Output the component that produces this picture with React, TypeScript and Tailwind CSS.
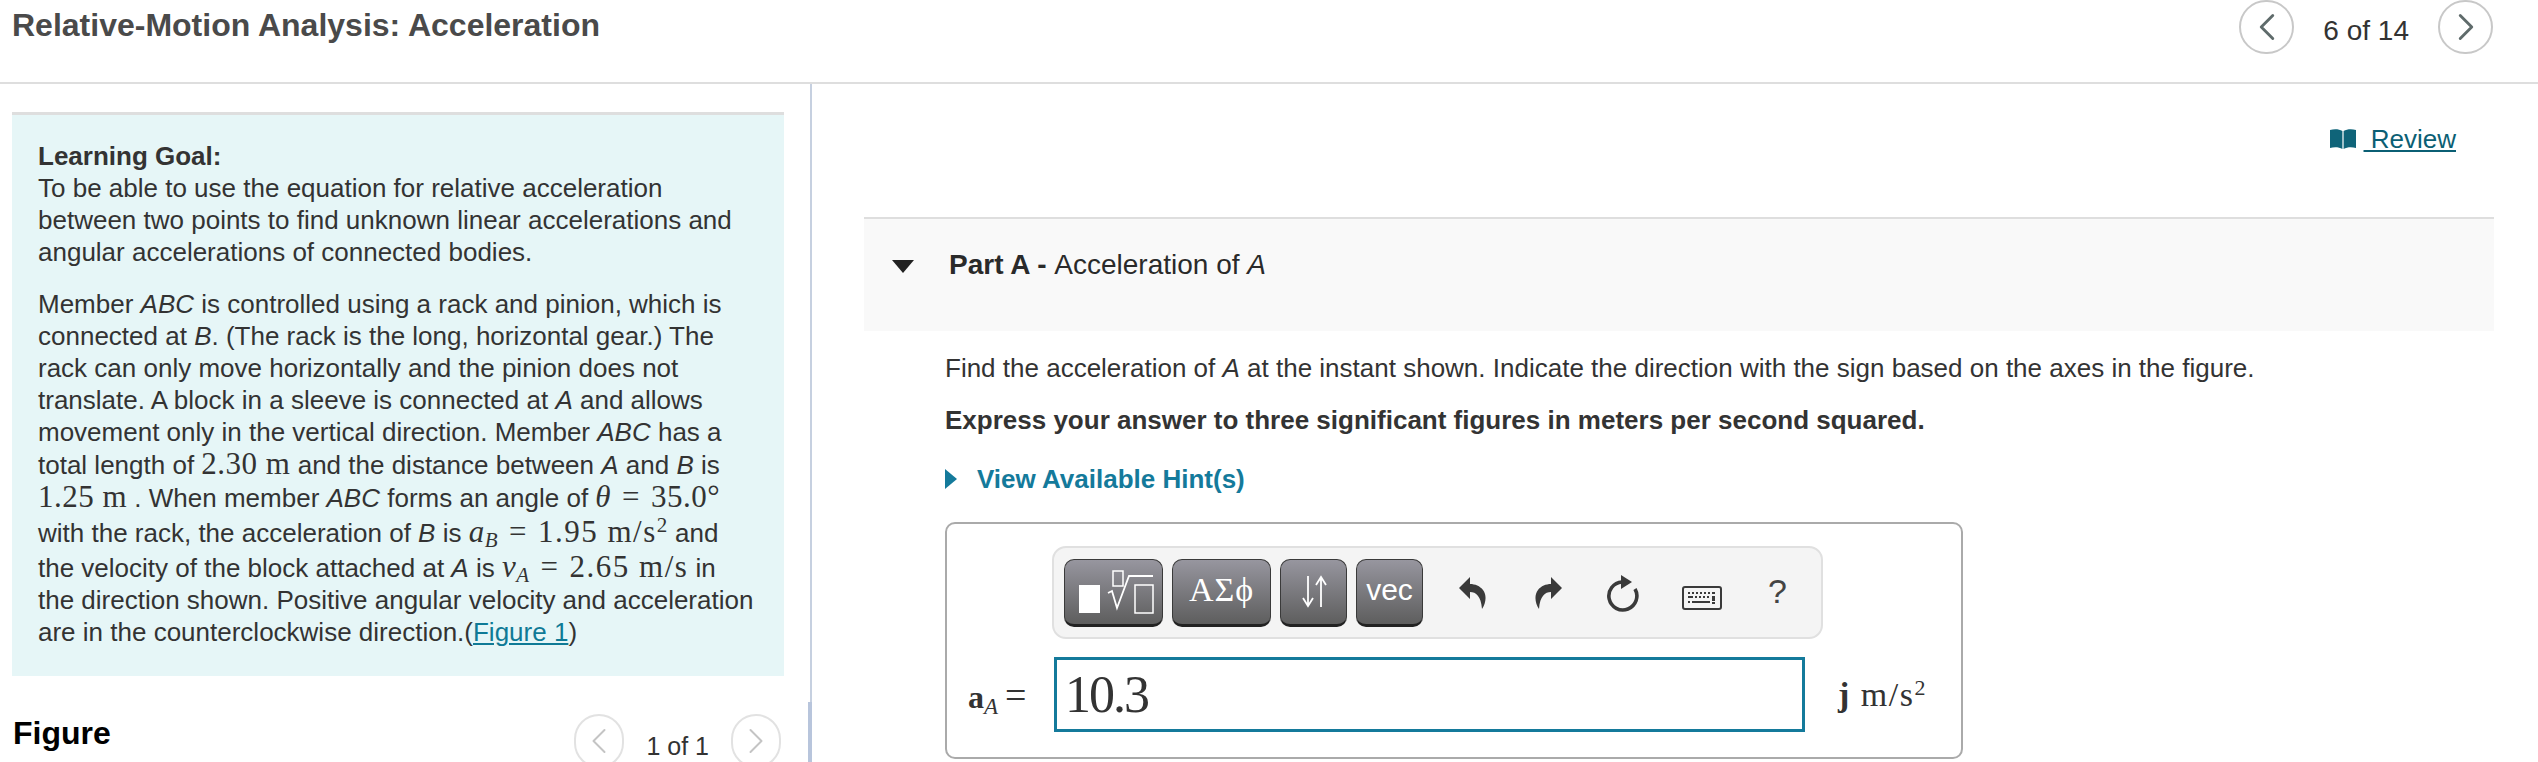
import React from 'react';
import { ChevronLeft, ChevronRight } from 'lucide-react';

const Tex = ({ children, tall }: { children: React.ReactNode; tall?: boolean }) => (
  <span className={`font-['Liberation_Serif',serif] text-[31px] tracking-[0.5px] ${tall ? 'leading-[35px]' : 'leading-[32px]'}`}>
    {children}
  </span>
);

const Eq = () => <span className="mx-[11px]">=</span>;

function Pager({ label, small }: { label: string; small?: boolean }) {
  const circle = `flex items-center justify-center rounded-full border-2 shrink-0 ${
    small ? 'w-[50px] h-[54px] border-[#e2e2e2]' : 'w-[55px] h-[54px] border-[#c8c8c8]'
  }`;
  const chevron = small ? 'shrink-0 text-[#c4c4c4]' : 'shrink-0 text-[#5f6b6b]';
  return (
    <div className="flex items-start">
      <div className={circle}>
        <ChevronLeft size={small ? 44 : 46} strokeWidth={small ? 1.1 : 1.5} className={chevron} />
      </div>
      <span className={small ? 'mx-[22px] mt-[20px] text-[25px] leading-none text-[#333]' : 'mx-[29px] mt-[17px] text-[28px] leading-none text-[#333]'}>
        {label}
      </span>
      <div className={circle}>
        <ChevronRight size={small ? 44 : 46} strokeWidth={small ? 1.1 : 1.5} className={chevron} />
      </div>
    </div>
  );
}

function ToolButton({ w, children }: { w: string; children: React.ReactNode }) {
  return (
    <div
      className={`${w} h-[68px] flex items-center justify-center rounded-[10px] border border-[#3a3a3a] border-b-[3px] border-b-[#222] bg-gradient-to-b from-[#97969f] to-[#5e5e5e] text-white`}
    >
      {children}
    </div>
  );
}

function MathToolbar() {
  return (
    <div className="w-[771px] h-[93px] flex items-center pl-[10px] rounded-[14px] border-2 border-[#e0e0e0] bg-[#f4f4f4]">
      <div className="flex gap-[9px]">
        <ToolButton w="w-[99px]">
          <svg width="97" height="64" viewBox="1 1 97 64" fill="none">
            <rect x="15" y="26" width="21" height="28" fill="#fff" />
            <rect x="49" y="12" width="10" height="15" stroke="#fff" strokeWidth="1.5" />
            <path d="M44 34 L48 32 L53 49 L65 17 H89" stroke="#fff" strokeWidth="1.8" />
            <rect x="71" y="26" width="18" height="28" stroke="#fff" strokeWidth="1.5" />
          </svg>
        </ToolButton>
        <ToolButton w="w-[99px]">
          <span className="font-['Liberation_Serif',serif] text-[34px] leading-none tracking-[1px] -mt-[3px]">ΑΣϕ</span>
        </ToolButton>
        <ToolButton w="w-[67px]">
          <svg width="30" height="34" viewBox="0 0 30 34" fill="none" stroke="#fff" strokeWidth="1.8">
            <path d="M9 1 V31 M4 23 L9 31 L14 23" />
            <path d="M22 32 V2 M17 10 L22 2 L27 10" />
          </svg>
        </ToolButton>
        <ToolButton w="w-[67px]">
          <span className="text-[30px] leading-none -mt-[4px]">vec</span>
        </ToolButton>
      </div>
      {/* undo */}
      <svg width="27" height="32" viewBox="0 0 27 32" fill="#3a3a3a" className="ml-[36px]">
        <path d="M11 0 L0 11 L11 22 V15 C17 15 22 19 23 32 C27 26 28 18 24 13 C21 9 16 7 11 7 Z" />
      </svg>
      {/* redo */}
      <svg width="27" height="32" viewBox="0 0 27 32" fill="#3a3a3a" className="ml-[49px]">
        <path d="M16 0 L27 11 L16 22 V15 C10 15 5 19 4 32 C0 26 -1 18 3 13 C6 9 11 7 16 7 Z" />
      </svg>
      {/* reset */}
      <svg width="36" height="38" viewBox="0 0 36 38" fill="none" className="ml-[43px] mt-[2px]">
        <path d="M30 14 A14 14 0 1 1 17 7" stroke="#3a3a3a" strokeWidth="3.6" />
        <path d="M16 0 L27 7 L16 14 Z" fill="#3a3a3a" />
      </svg>
      <svg width="40" height="24" viewBox="0 0 40 24" className="ml-[41px] mt-[10px]" fill="#3a3a3a">
        <rect x="1" y="1" width="38" height="22" rx="2" fill="none" stroke="#3a3a3a" strokeWidth="2" />
        <path d="M6 6h2v2H6zM10 6h2v2h-2zM14 6h2v2h-2zM18 6h2v2h-2zM22 6h2v2h-2zM26 6h2v2h-2zM30 6h3v2h-3zM6 10h5v2H6zM13 10h2v2h-2zM17 10h2v2h-2zM21 10h2v2h-2zM25 10h2v2h-2zM30 10h3v5h-3zM6 15h2v2H6zM10 15h18v2H10zM30 16h3v2h-3z" />
      </svg>
      <span className="ml-[46px] text-[34px] leading-none text-[#444] -mt-[3px]">?</span>
    </div>
  );
}

export default function App() {
  return (
    <div className="w-full h-[762px] overflow-hidden bg-white font-['Liberation_Sans',Arial,sans-serif]">
      <header className="h-[84px] flex items-start justify-between border-b-2 border-[#dedede] pl-[12px] pr-[45px]">
        <h1 className="text-[32px] leading-[50px] font-bold text-[#4a4a4a]">Relative-Motion Analysis: Acceleration</h1>
        <Pager label="6 of 14" />
      </header>

      <div className="flex">
        {/* Left column */}
        <div className="relative w-[812px] h-[678px] shrink-0 border-r-2 border-[#c6d0e0] pt-[28px] pl-[12px]">
          <div className="w-[772px] h-[564px] border-t-[3px] border-[#dedede] bg-[#e6f6f7] pl-[26px] pr-[27px] pt-[25px] text-[26px] leading-[32px] text-[#333]">
            <p className="font-bold">Learning Goal:</p>
            <p>To be able to use the equation for relative acceleration between two points to find unknown linear accelerations and angular accelerations of connected bodies.</p>
            <p className="mt-[20px]">
              Member <i>ABC</i> is controlled using a rack and pinion, which is connected at <i>B</i>. (The rack is the long, horizontal gear.) The rack can only move horizontally and the pinion does not translate. A block in a sleeve is connected at <i>A</i> and allows movement only in the vertical direction. Member <i>ABC</i> has a total length of <Tex>2.30 m</Tex> and the distance between <i>A</i> and <i>B</i> is <Tex>1.25 m</Tex> . When member <i>ABC</i> forms an angle of <Tex><i>θ</i><Eq />35.0°</Tex> with the rack, the acceleration of <i>B</i> is <Tex tall><i>a<sub className="text-[21px]">B</sub></i><Eq /><span className="tracking-[1.5px]">1.95 m/s</span><sup className="text-[21px]">2</sup></Tex> and the velocity of the block attached at <i>A</i> is <Tex tall><i>v<sub className="text-[21px]">A</sub></i><Eq /><span className="tracking-[1.5px]">2.65 m/s</span></Tex> in the direction shown. Positive angular velocity and acceleration are in the counterclockwise direction.(<a className="underline text-[#0f7a96]">Figure 1</a>)
            </p>
          </div>
          <div className="flex items-start justify-between mt-[38px] pr-[29px]">
            <h2 className="text-[32px] leading-[36px] font-bold text-black mt-[1px] ml-[1px]">Figure</h2>
            <Pager label="1 of 1" small />
          </div>
          {/* scrollbar thumb */}
          <div className="absolute right-[-2px] top-[618px] bottom-0 w-[4px] bg-[#b8c5dc]" />
        </div>

        {/* Right column */}
        <div className="flex-1 pl-[52px] pr-[44px]">
          <div className="flex justify-end pt-[40px] pr-[38px]">
            <a className="flex items-center text-[26px] leading-[30px] text-[#0b5f74] underline">
              <svg width="26" height="20" viewBox="0 0 26 20" fill="#0f6479" className="mr-[8px]">
                <path d="M0 1 C4 0 9 0 12.4 2 V20 C9 18 4 18 0 19 Z" />
                <path d="M26 1 C22 0 17 0 13.6 2 V20 C17 18 22 18 26 19 Z" />
              </svg>
              &nbsp;Review
            </a>
          </div>

          <div className="mt-[63px] h-[114px] border-t-2 border-[#dedede] bg-[#f9f9f9] flex items-start pt-[29px] pl-[28px]">
            <svg width="22" height="13" viewBox="0 0 22 13" className="mt-[12px]" fill="#222">
              <path d="M0 0 H22 L11 13 Z" />
            </svg>
            <h3 className="ml-[35px] text-[28px] leading-[34px] text-[#2a2a2a]">
              <b>Part A - </b>Acceleration of <i>A</i>
            </h3>
          </div>

          <div className="pl-[81px] text-[26px] leading-[32px] text-[#333]">
            <p className="mt-[21px]">Find the acceleration of <i>A</i> at the instant shown. Indicate the direction with the sign based on the axes in the figure.</p>
            <p className="mt-[20px] font-bold">Express your answer to three significant figures in meters per second squared.</p>
            <div className="mt-[27px] flex items-center font-bold text-[#147a9b]">
              <svg width="12" height="20" viewBox="0 0 12 20" fill="#147a9b"><path d="M0 0 L12 10 L0 20 Z" /></svg>
              <span className="ml-[20px]">View Available Hint(s)</span>
            </div>

            <div className="mt-[27px] w-[1018px] h-[237px] rounded-[10px] border-2 border-[#aaaaaa] pt-[22px] pl-[105px]">
              <MathToolbar />
              <div className="flex items-center mt-[18px] -ml-[84px]">
                <span className="w-[86px] font-['Liberation_Serif',serif] text-[#333] leading-none whitespace-nowrap">
                  <b className="text-[32px]">a</b><i className="text-[23px] relative top-[6px]">A</i>
                  <span className="text-[38px] ml-[7px]">=</span>
                </span>
                <div className="w-[751px] h-[75px] border-[3px] border-[#147a9b] bg-white pl-[8px] flex items-center">
                  <span className="font-['Liberation_Serif',serif] text-[52px] tracking-[-2px] leading-none text-[#333]">10.3</span>
                </div>
                <span className="ml-[33px] font-['Liberation_Serif',serif] text-[34px] tracking-[1.5px] text-[#333] leading-none whitespace-nowrap">
                  <b>j</b> m/s<sup className="text-[22px]">2</sup>
                </span>
              </div>
            </div>
          </div>
        </div>
      </div>
    </div>
  );
}
